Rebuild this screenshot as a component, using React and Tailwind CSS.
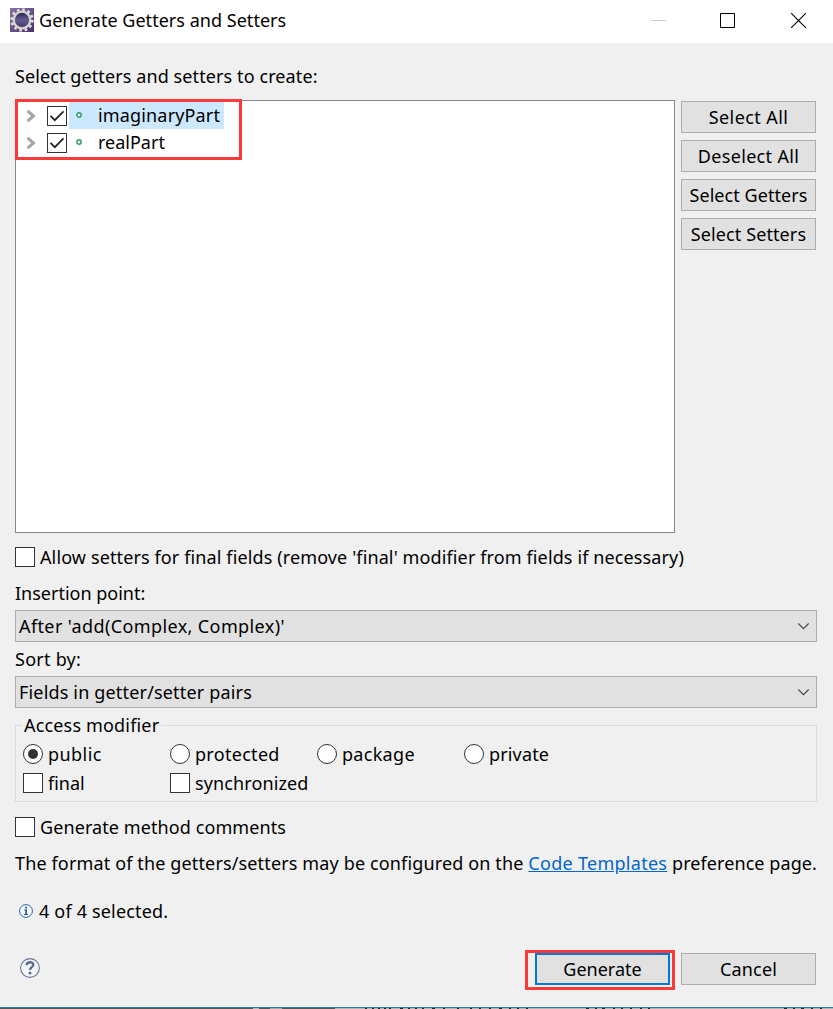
import { useState } from 'react';

const FIELDS = [
  { name: 'imaginaryPart', tracking: 'tracking-[0.16px]' },
  { name: 'realPart', tracking: '' },
];

const ACCESS = [
  { name: 'public', tracking: 'tracking-[0.45px]' },
  { name: 'protected', tracking: 'tracking-[0.3px]' },
  { name: 'package', tracking: 'tracking-[0.3px]' },
  { name: 'private', tracking: 'tracking-[0.15px]' },
];

// [left, width] of the editor marks visible under the window edge
const MARKS = [
  [365, 2], [372, 2], [378, 2], [384, 2], [389, 2], [400, 3], [408, 2], [415, 2], [422, 2], [432, 3],
  [443, 2], [457, 2], [470, 2], [479, 2], [489, 2], [499, 3], [509, 2], [517, 2], [526, 2], [586, 3],
  [595, 2], [602, 3], [613, 2], [621, 2], [630, 2], [640, 2], [648, 2], [784, 3], [793, 2], [801, 3], [811, 2], [820, 2],
];

export default function App() {
  const [checked, setChecked]   = useState({ imaginaryPart: true, realPart: true });
  const [selected, setSelected] = useState('imaginaryPart');
  const [access, setAccess]     = useState('public');
  const [options, setOptions]   = useState({});

  const toggleField  = (name) => setChecked({ ...checked, [name]: !checked[name] });
  const toggleOption = (name) => setOptions({ ...options, [name]: !options[name] });
  const setAll       = (value) => setChecked({ imaginaryPart: value, realPart: value });
  const count        = FIELDS.filter(f => checked[f.name]).length * 2;

  return (
    <div className="flex h-[1009px] w-[833px] flex-col overflow-hidden bg-[#f0f0f0] font-['Noto_Sans','Open_Sans',sans-serif] text-[18px] leading-6 whitespace-nowrap text-black">

      {/* Title bar */}
      <header className="flex h-[43px] shrink-0 items-start bg-white pl-2.5">
        <GearIcon />
        <h1 className="mt-2 ml-[5px] tracking-[0.03px]">Generate Getters and Setters</h1>
        <div className="mt-[13px] mr-[27px] ml-auto flex">
          <svg className="h-[15px] w-[15px]" viewBox="0 0 15 15">
            <path d="M0 7.5h15" stroke="#ccc" />
          </svg>
          <svg className="ml-[54px] h-[15px] w-[15px]" viewBox="0 0 15 15">
            <path d="M.5.5h14v14H.5z" fill="none" stroke="#000" />
          </svg>
          <svg className="ml-14 h-[15px] w-[15px]" viewBox="0 0 15 15">
            <path d="M0 0l15 15M15 0L0 15" stroke="#000" strokeWidth="1.1" />
          </svg>
        </div>
      </header>

      <main className="flex h-[964px] shrink-0 flex-col pr-4 pl-[15px]">
        <p className="mt-[21px] h-9 tracking-[0.1px]">Select getters and setters to create:</p>

        <div className="flex gap-1.5">
          {/* Field tree */}
          <div className="relative h-[433px] w-[660px] border border-[#828790] bg-white pt-px">
            {FIELDS.map(f => (
              <div key={f.name} className="flex h-[27px] items-center pl-2.5">
                <svg className="mr-[11px] h-3 w-2.5" viewBox="0 0 10 12">
                  <path d="M1.5.8l6 5.200-6 5.200" fill="none" stroke="#a6a6a6" strokeWidth="3" />
                </svg>
                <Check checked={checked[f.name]} onClick={() => toggleField(f.name)} />
                <div onClick={() => setSelected(f.name)}
                  className={`ml-0.5 flex h-[27px] items-center pr-1 pl-[7px] ${selected === f.name ? 'bg-[#cce8ff]' : ''}`}>
                  <svg className="mr-4 mb-px h-1.5 w-1.5" viewBox="0 0 6 6">
                    <circle cx="3" cy="3" r="2.2" fill="#e6f5ec" stroke="#2e9a60" strokeWidth="1.4" />
                  </svg>
                  <span className={`mb-px ${f.tracking}`}>{f.name}</span>
                </div>
              </div>
            ))}
            <div className="pointer-events-none absolute -top-0.5 -left-px h-[61px] w-[227px] border-3 border-[#fc3a3a]" />
          </div>

          <div className="mt-px flex flex-col gap-[7px]">
            <Button className="tracking-[0.4px]" onClick={() => setAll(true)}>Select All</Button>
            <Button className="tracking-[0.33px]" onClick={() => setAll(false)}>Deselect All</Button>
            <Button className="tracking-[0.07px]">Select Getters</Button>
            <Button className="tracking-[0.1px]">Select Setters</Button>
          </div>
        </div>

        <Option className="mt-3 tracking-[0.123px]" checked={options.allow} onClick={() => toggleOption('allow')}>
          Allow setters for final fields (remove 'final' modifier from fields if necessary)
        </Option>

        <p className="mt-3">Insertion point:</p>
        <Combo className="mt-[5px] tracking-[0.39px]">After 'add(Complex, Complex)'</Combo>
        <p className="mt-[5px] tracking-[0.25px]">Sort by:</p>
        <Combo className="mt-[5px] tracking-[0.17px]">Fields in getter/setter pairs</Combo>

        {/* Access modifier group */}
        <section className="mt-[17px] h-[77px] border border-[#dcdcdc] pl-[7px]">
          <h2 className="-mt-[13px] -ml-px w-fit bg-[#f0f0f0] px-0.5 tracking-[0.17px]">Access modifier</h2>
          <div className="mt-[5px] grid grid-cols-[147px_147px_147px_147px] gap-y-[5px]">
            {ACCESS.map(({ name, tracking }) => (
              <label key={name} className="flex h-6 items-center gap-[5px]">
                <Radio checked={access === name} onClick={() => setAccess(name)} />
                <span className={tracking}>{name}</span>
              </label>
            ))}
            <Option checked={options.final} onClick={() => toggleOption('final')}>final</Option>
            <Option className="tracking-[0.12px]" checked={options.sync} onClick={() => toggleOption('sync')}>synchronized</Option>
          </div>
        </section>

        <Option className="mt-[13px] tracking-[0.09px]" checked={options.comments} onClick={() => toggleOption('comments')}>
          Generate method comments
        </Option>

        <p className="mt-3 tracking-[0.14px]">
          The format of the getters/setters may be configured on the{' '}
          <a href="#" className="tracking-[0.28px] text-[#0066cc] underline">Code Templates</a>
          <span className="tracking-[0.08px]"> preference page.</span>
        </p>

        <div className="mt-6 flex h-6 items-center pl-1">
          <svg className="mr-1.5 h-3.5 w-3.5" viewBox="0 0 14 14">
            <circle cx="7" cy="7" r="6.4" fill="#f8fbff" stroke="#2563a5" strokeWidth="1" />
            <path d="M7 2.8v1.7" fill="none" stroke="#1e5a9c" strokeWidth="1.8" />
            <path d="M5.200 6H7v4.200" fill="none" stroke="#1e5a9c" strokeWidth="1.2" />
            <path d="M7.300 5.500v5M5 10.500h4" fill="none" stroke="#1e5a9c" strokeWidth="1.1" />
          </svg>
          <span className="tracking-[0.18px]">{count} of 4 selected.</span>
        </div>

        <footer className="mt-[27px] flex h-10 items-start">
          <svg className="mt-2 ml-[5px] h-5 w-5" viewBox="0 0 20 20">
            <circle cx="10" cy="10" r="9.4" fill="#f3f4f6" stroke="#66779a" strokeWidth="1.1" />
            <path d="M6.600 7.200C6.800 3.200 13.600 3.400 13.300 7c-.2 2.200-3.300 2.300-3.300 5" fill="none" stroke="#5a6b8e" strokeWidth="2.300" />
            <circle cx="10" cy="15" r="1.500" fill="#5a6b8e" />
          </svg>
          <div className="ml-auto h-10 border-3 border-[#fc3a3a] pr-0.5 pl-[7px]">
            <Button primary>Generate</Button>
          </div>
          <div className="mt-[3px] mr-px ml-1.5">
            <Button className="tracking-[0.2px]">Cancel</Button>
          </div>
        </footer>
      </main>

      {/* Window edge with the editor showing behind it */}
      <div className="h-px shrink-0 bg-[#2b7ab8]" />
      <div className="relative flex h-px shrink-0">
        <div className="w-[335px] bg-[#555]" />
        <div className="flex-1 bg-[#b4b4b4]" />
        <span className="absolute left-[253px] h-px w-1.5 bg-[#bbb]" />
        <span className="absolute left-[270px] h-px w-3 bg-[#aaa]" />
        {MARKS.map(([left, width]) => (
          <span key={left} className="absolute h-px bg-[#222]" style={{ left, width }} />
        ))}
      </div>
    </div>
  );
}

function Button({ children, primary, onClick, className = '' }) {
  return (
    <button type="button" onClick={onClick}
      className={`flex h-8 w-[135px] items-center justify-center bg-[#e1e1e1] ${primary ? 'border-2 border-[#0078d7]' : 'border border-[#adadad]'} ${className}`}>
      {children}
    </button>
  );
}

function Check({ checked, onClick }) {
  return (
    <button type="button" onClick={onClick} className="h-5 w-5 shrink-0 border border-[#333] bg-white">
      {checked && (
        <svg className="h-[18px] w-[18px]" viewBox="0 0 18 18">
          <path d="M2.500 8.800l4.300 4.400 8.700-8.900" fill="none" stroke="#222" strokeWidth="1.700" />
        </svg>
      )}
    </button>
  );
}

function Option({ children, checked, onClick, className = '' }) {
  return (
    <label className={`flex h-6 items-center gap-[5px] ${className}`}>
      <Check checked={checked} onClick={onClick} />
      <span>{children}</span>
    </label>
  );
}

function Radio({ checked, onClick }) {
  return (
    <button type="button" onClick={onClick}
      className="flex h-5 w-5 items-center justify-center rounded-full border border-[#333] bg-white">
      {checked && <span className="h-2.5 w-2.5 rounded-full bg-[#333]" />}
    </button>
  );
}

function Combo({ children, className = '' }) {
  return (
    <div className={`flex h-8 items-center justify-between border border-[#adadad] bg-[#e1e1e1] pr-[7px] pl-[3px] ${className}`}>
      <span>{children}</span>
      <svg className="h-[7px] w-[11px]" viewBox="0 0 11 7">
        <path d="M.3.500l5.200 5.200L10.700.5" fill="none" stroke="#444" strokeWidth="1.200" />
      </svg>
    </div>
  );
}

function GearIcon() {
  return (
    <svg className="mt-2 h-6 w-6" viewBox="0 0 24 24">
      <defs>
        <linearGradient id="gear-bg" x2="1" y2="1">
          <stop stopColor="#8472a6" />
          <stop offset="1" stopColor="#49306f" />
        </linearGradient>
        <linearGradient id="gear-core" x2="0" y2="1">
          <stop stopColor="#252048" />
          <stop offset=".5" stopColor="#625c92" />
          <stop offset="1" stopColor="#403765" />
        </linearGradient>
      </defs>
      <path d="M0 0h24v24H0z" fill="url(#gear-bg)" />
      <circle cx="12" cy="12" r="10.400" fill="none" stroke="#e4e2dc" strokeWidth="2.600" strokeDasharray="2.600 2.845" />
      <circle cx="12" cy="12" r="8.300" fill="url(#gear-core)" stroke="#d6d4cf" strokeWidth="2.300" />
    </svg>
  );
}
